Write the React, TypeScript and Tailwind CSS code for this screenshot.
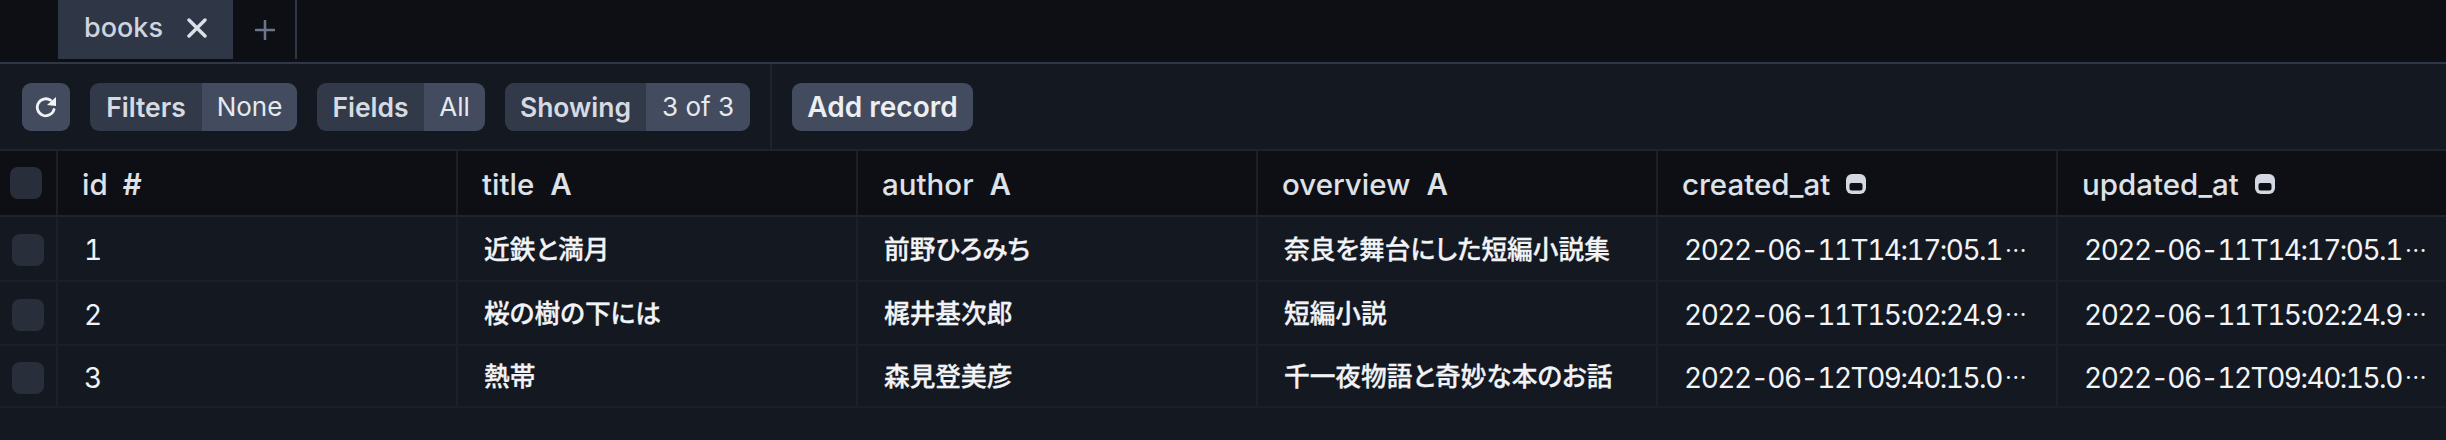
const font = { fontFamily: '"Inter", "Noto Sans CJK JP", sans-serif' };

type Row = { id: string; title: string; author: string; overview: string; created: string; updated: string; h: string };

const rows: Row[] = [
  { id: "1", title: "近鉄と満月", author: "前野ひろみち", overview: "奈良を舞台にした短編小説集", created: "2022-06-11T14:17:05.1", updated: "2022-06-11T14:17:05.1", h: "h-[65px]" },
  { id: "2", title: "桜の樹の下には", author: "梶井基次郎", overview: "短編小説", created: "2022-06-11T15:02:24.9", updated: "2022-06-11T15:02:24.9", h: "h-[64px]" },
  { id: "3", title: "熱帯", author: "森見登美彦", overview: "千一夜物語と奇妙な本のお話", created: "2022-06-12T09:40:15.0", updated: "2022-06-12T09:40:15.0", h: "h-[62px]" },
];

function RefreshIcon() {
  return (
    <svg width="22" height="22" viewBox="0 0 22 22" fill="none" aria-hidden>
      <path d="M19 13.5A8.5 8.5 0 1 1 15.5 4.2" stroke="#f1f3f6" strokeWidth="2.8" strokeLinecap="round" />
      <path d="M12 9L21 1V10Z" fill="#f1f3f6" />
    </svg>
  );
}

function DbIcon() {
  return (
    <svg width="20" height="20" viewBox="0 0 20 20" aria-hidden>
      <rect x="0" y="0" width="20" height="20" rx="6" fill="#d3d8e2" />
      <rect x="3.5" y="9" width="13" height="7.5" rx="2" fill="#0d0f14" />
    </svg>
  );
}

function Pill({ label, value, lw, vw }: { label: string; value: string; lw: string; vw: string }) {
  return (
    <div className="flex h-[48px] rounded-[9px] overflow-hidden leading-[48px]">
      <div className={`${lw} bg-[#323a49] text-[#d5dae3] text-[26.5px] font-semibold text-center`}>{label}</div>
      <div className={`${vw} bg-[#434c5e] text-[#e6e9ef] text-[26px] text-center`}>{value}</div>
    </div>
  );
}

function Header({ name, icon }: { name: string; icon: React.ReactNode }) {
  return (
    <div className="w-[400px] shrink-0 flex items-center gap-[16px] pl-[24px] pr-3 pt-[2px] border-r-2 border-[#1b1f2a] text-[29.5px] font-medium text-[#dde1e8]">
      <span>{name}</span>
      {icon}
    </div>
  );
}

function Cell({ children, cls }: { children: React.ReactNode; cls?: string }) {
  return (
    <div className={`w-[400px] shrink-0 flex items-center pl-[26px] pt-[3px] whitespace-nowrap overflow-hidden border-r-2 border-[#1b1f2a] text-[#f1f3f6] ${cls || "text-[28px] tabular-nums tracking-[-1.5px]"}`}>
      {children}
    </div>
  );
}

function Time({ v }: { v: string }) {
  return (
    <span className="flex items-center">
      {v}
      <span className="ml-[3px] tracking-[1px] text-[22px]">⋯</span>
    </span>
  );
}

const cjk = 'text-[25.7px] font-medium [font-feature-settings:"palt"] [-webkit-text-stroke:0.3px]';

export default function App() {
  return (
    <div className="w-[2446px] h-[440px] overflow-hidden bg-[#141821] flex flex-col" style={font}>
      <div className="h-[64px] shrink-0 bg-[#0d0f14] border-b-2 border-[#2f3747] flex items-start pl-[58px]">
        <div className="h-[59px] w-[175px] bg-[#2f3747] flex items-center pl-[26px] pb-[3px] text-[27px] font-medium text-[#cfd4de]">
          books
          <svg className="ml-[24px]" width="20" height="20" viewBox="0 0 20 20" aria-hidden>
            <path d="M2 2L18 18M18 2L2 18" stroke="#dce0e8" strokeWidth="3.4" strokeLinecap="round" />
          </svg>
        </div>
        <div className="h-[59px] w-[64px] flex items-center justify-center pl-[2px] border-r-2 border-[#2f3747]">
          <svg width="20" height="20" viewBox="0 0 20 20" aria-hidden>
            <path d="M10 1V19M1 10H19" stroke="#6b7689" strokeWidth="2.6" strokeLinecap="round" />
          </svg>
        </div>
      </div>

      <div className="h-[87px] shrink-0 flex border-b-2 border-[#1e2330]">
        <div className="w-[772px] shrink-0 flex items-center gap-[20px] pl-[22px] border-r-2 border-[#1e2330]">
          <div className="w-[48px] h-[48px] rounded-[9px] bg-[#434c5e] flex items-center justify-center">
            <RefreshIcon />
          </div>
          <Pill label="Filters" value="None" lw="w-[112px]" vw="w-[95px]" />
          <Pill label="Fields" value="All" lw="w-[107px]" vw="w-[61px]" />
          <Pill label="Showing" value="3 of 3" lw="w-[141px]" vw="w-[104px]" />
        </div>
        <div className="flex items-center pl-[20px]">
          <div className="h-[48px] w-[181px] rounded-[9px] bg-[#434c5e] text-[28px] leading-[48px] font-semibold text-center text-[#eceef2]">Add record</div>
        </div>
      </div>

      <div className="h-[66px] shrink-0 flex bg-[#0d0f14] border-b-2 border-[#1e2330]">
        <div className="w-[58px] shrink-0 flex items-center pl-[10px] border-r-2 border-[#1b1f2a]">
          <div className="w-[32px] h-[32px] rounded-[8px] bg-[#282e3a]" />
        </div>
        <Header name="id" icon={<span className="font-semibold -ml-[1px]">#</span>} />
        <Header name="title" icon={<span className="font-semibold">A</span>} />
        <Header name="author" icon={<span className="font-semibold">A</span>} />
        <Header name="overview" icon={<span className="font-semibold">A</span>} />
        <Header name="created_at" icon={<DbIcon />} />
        <Header name="updated_at" icon={<DbIcon />} />
      </div>

      {rows.map((r) => (
        <div key={r.id} className={`${r.h} shrink-0 flex border-b-2 border-[#1b1f2a]`}>
          <div className="w-[58px] shrink-0 flex items-center pl-[12px] pt-[3px] border-r-2 border-[#1b1f2a]">
            <div className="w-[32px] h-[32px] rounded-[8px] bg-[#282e3a]" />
          </div>
          <Cell>{r.id}</Cell>
          <Cell cls={cjk}>{r.title}</Cell>
          <Cell cls={cjk}>{r.author}</Cell>
          <Cell cls={cjk}>{r.overview}</Cell>
          <Cell><Time v={r.created} /></Cell>
          <Cell><Time v={r.updated} /></Cell>
        </div>
      ))}
    </div>
  );
}
